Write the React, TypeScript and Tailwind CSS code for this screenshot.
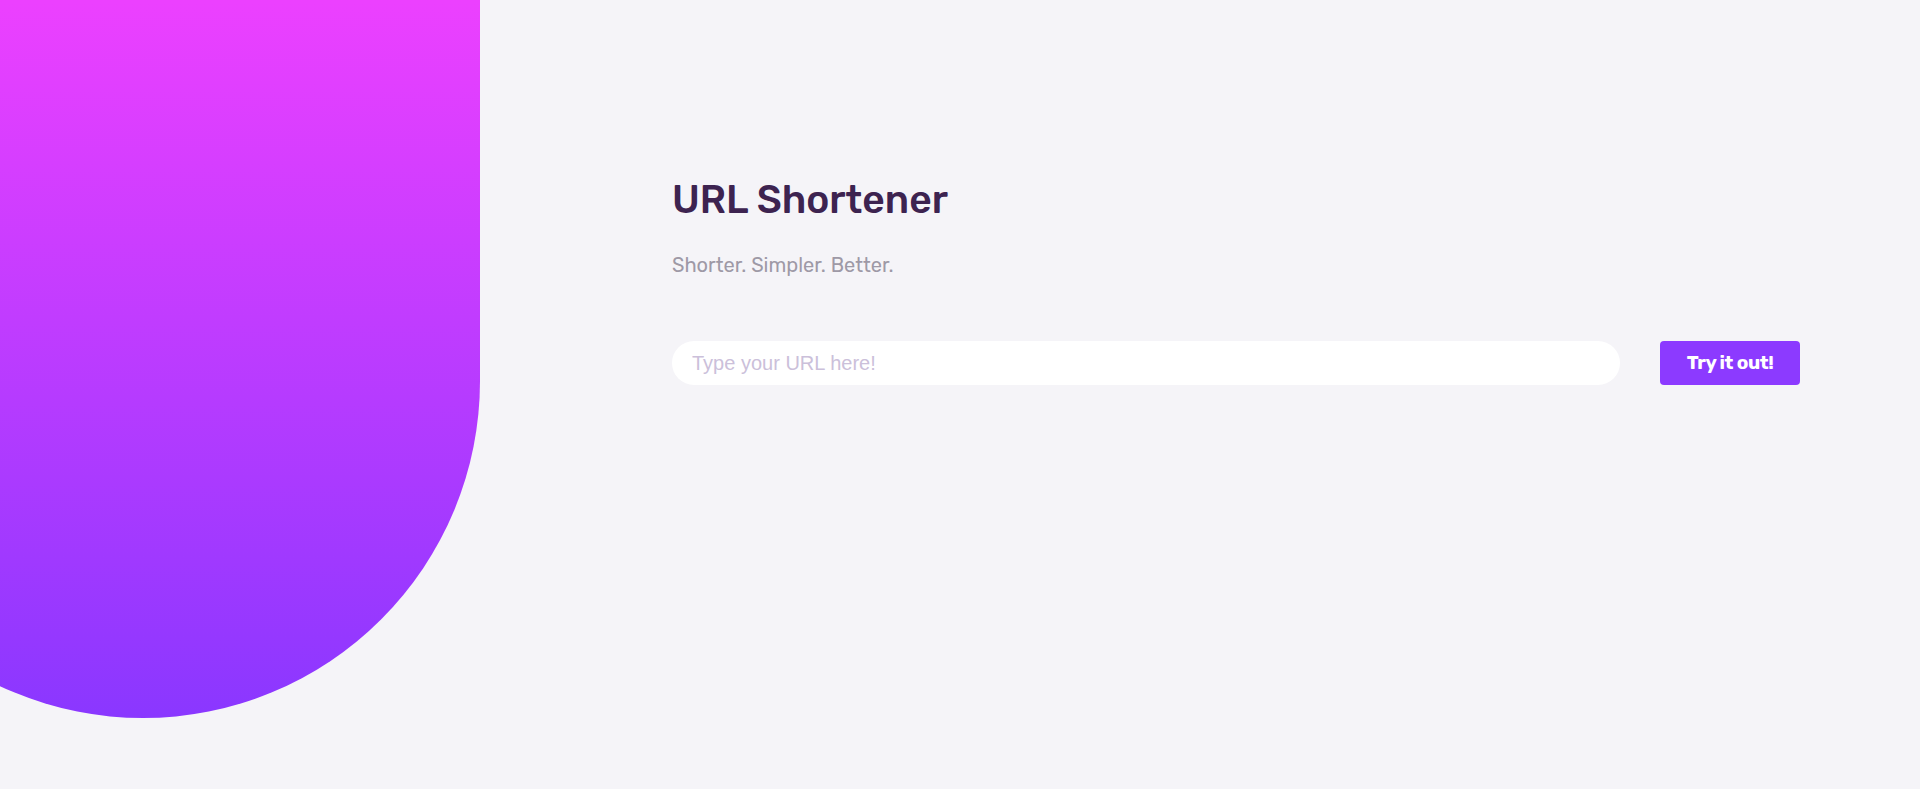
import React from "react";

const App: React.FC = () => {
  return (
    <div className="relative min-h-screen w-full overflow-hidden bg-[#f5f4f8] font-['Rubik','Inter',sans-serif]">
      {/* decorative pill behind the content */}
      <div className="absolute left-[-194px] top-[-400px] h-[1118px] w-[674px] rounded-b-[337px] bg-[linear-gradient(to_bottom,#f041ff_0%,#ec40ff_36%,#8a37ff_100%)]" />

      <main className="relative pl-[672px] pr-[120px] pt-[176px]">
        <h1 className="text-[39px] font-medium leading-[48px] text-[#3d2350]">
          URL Shortener
        </h1>
        <p className="mt-[27px] text-[20px] leading-[28px] text-[#9e99a6]">
          Shorter. Simpler. Better.
        </p>

        <form
          className="mt-[62px] flex w-[1128px] items-center gap-10"
          onSubmit={(e) => e.preventDefault()}
        >
          <input
            type="text"
            placeholder="Type your URL here!"
            className="h-[44px] flex-1 rounded-full bg-white px-5 font-['Liberation_Sans',Arial,sans-serif] text-[20px] text-[#3d2350] outline-none placeholder:text-[#cbc0da]"
          />
          <button
            type="submit"
            className="h-[44px] w-[140px] rounded-[4px] bg-[#8c3aff] text-[19px] font-bold tracking-[-0.4px] text-white"
          >
            Try it out!
          </button>
        </form>
      </main>
    </div>
  );
};

export default App;
